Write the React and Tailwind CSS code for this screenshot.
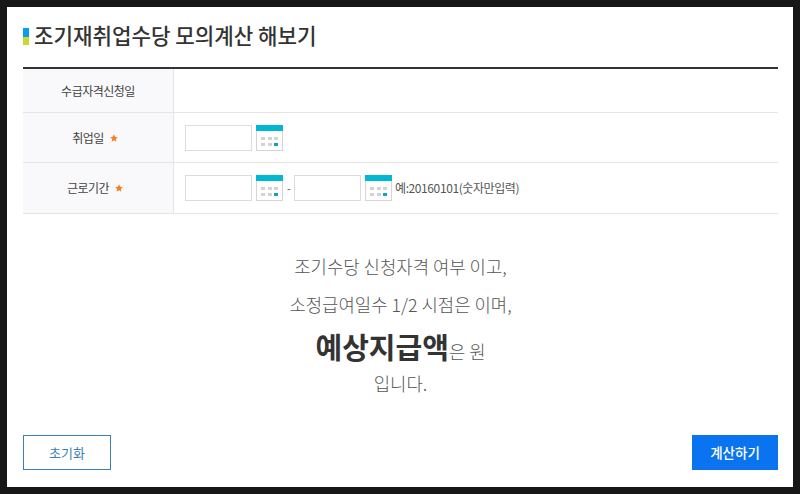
const CalendarIcon = () => (
  <svg width="27" height="26" viewBox="0 0 27 26" className="shrink-0 block">
    <rect x="0.5" y="0.5" width="26" height="25" fill="#fff" stroke="#d5d5d5" />
    <rect x="0" y="0" width="27" height="6" fill="#00b8d4" />
    <rect x="5" y="12" width="4" height="3" fill="#d0d4d8" />
    <rect x="12" y="12" width="4" height="3" fill="#d0d4d8" />
    <rect x="18" y="12" width="4" height="3" fill="#d0d4d8" />
    <rect x="5" y="18" width="4" height="3" fill="#d0d4d8" />
    <rect x="12" y="18" width="4" height="3" fill="#d0d4d8" />
    <rect x="18" y="18" width="4" height="3" fill="#10a5b8" />
  </svg>
);

const Star = () => (
  <svg width="8" height="8" viewBox="0 0 24 24" className="ml-[6px] mr-[6px] shrink-0 block">
    <polygon points="12,1 15.4,8.6 23.5,9.4 17.4,14.9 19.1,23 12,18.8 4.9,23 6.6,14.9 0.5,9.4 8.6,8.6" fill="#f58220" />
  </svg>
);

const DateInput = () => (
  <input type="text" className="w-[67px] h-[26px] border border-[#dcdcdc] bg-white block shrink-0" />
);

const Row = ({ label, required, height, children }) => (
  <div className={`flex border-b border-[#e5e5e5] ${height}`}>
    <div className="w-[151px] shrink-0 bg-[#f9f9fb] border-r border-[#e5e5e5] flex items-center justify-center text-[12px] text-[#444] tracking-[-0.5px]">
      {label}
      {required && <Star />}
    </div>
    <div className="flex-1 flex items-center pl-[11px]">{children}</div>
  </div>
);

export default function App() {
  return (
    <div
      className="w-[800px] h-[494px] bg-[#171717] pt-[7px] pl-[7px] overflow-hidden"
      style={{ fontFamily: '"Noto Sans CJK KR", "Noto Sans", sans-serif' }}
    >
      <div className="w-[786px] h-[480px] bg-white pt-[16px] px-[16px] flex flex-col">
        <div className="flex items-center h-[26px]">
          <div className="w-[6px] h-[17px] flex flex-col shrink-0">
            <div className="h-[9px] bg-[#0a9cf0]" />
            <div className="h-[8px] bg-[#c6dc2c]" />
          </div>
          <h1 className="ml-[5px] pb-[2px] text-[21.2px] font-medium text-[#333] leading-none">
            조기재취업수당 모의계산 해보기
          </h1>
        </div>

        <div className="mt-[18px] w-[755px] border-t-2 border-[#333]">
          <Row label="수급자격신청일" height="h-[44px]" />
          <Row label="취업일" required height="h-[50px]">
            <DateInput />
            <div className="ml-[4px]"><CalendarIcon /></div>
          </Row>
          <Row label="근로기간" required height="h-[51px]">
            <DateInput />
            <div className="ml-[4px]"><CalendarIcon /></div>
            <span className="mx-[4px] text-[11px] text-[#555] w-[3px]">-</span>
            <DateInput />
            <div className="ml-[4px]"><CalendarIcon /></div>
            <span className="ml-[3px] text-[12px] text-[#555] tracking-[-0.4px]">예:20160101(숫자만입력)</span>
          </Row>
        </div>

        <div className="w-[755px] mt-[33px] flex flex-col items-center text-[17.8px] font-light text-[#555]">
          <p className="h-[38px] leading-[38px]">조기수당 신청자격 여부 이고,</p>
          <p className="h-[38px] leading-[38px]">소정급여일수 1/2 시점은 이며,</p>
          <p className="h-[46px] leading-[46px]">
            <strong className="text-[29px] font-bold text-[#333]">예상지급액</strong>은 원
          </p>
          <p className="h-[28px] leading-[28px]">입니다.</p>
        </div>

        <div className="w-[755px] mt-[38px] flex justify-between">
          <button className="w-[88px] h-[35px] border border-[#3d7fb0] bg-white text-[13px] text-[#3d7fb0]">
            초기화
          </button>
          <button className="w-[86px] h-[35px] bg-[#0a74f0] text-white text-[13.5px] font-medium">
            계산하기
          </button>
        </div>
      </div>
    </div>
  );
}
